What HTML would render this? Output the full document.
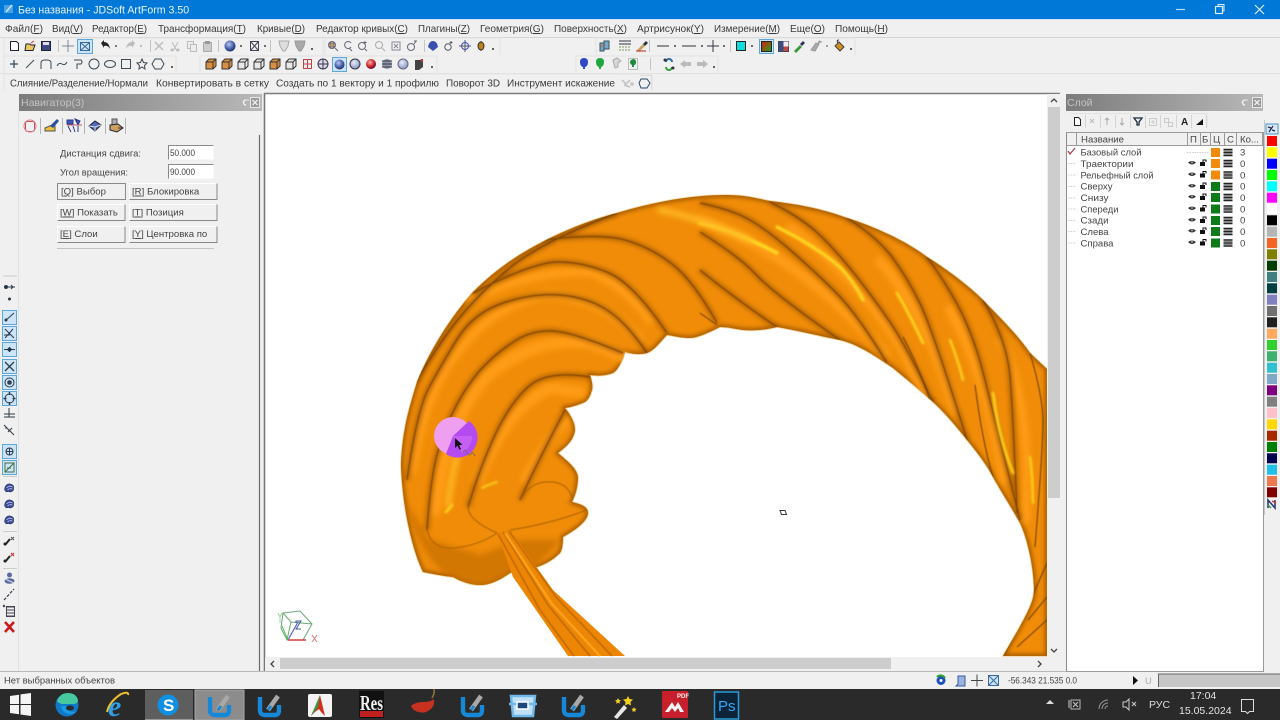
<!DOCTYPE html>
<html lang="ru"><head><meta charset="utf-8"><title>JDSoft ArtForm 3.50</title>
<style>
html,body{margin:0;padding:0;width:1280px;height:720px;overflow:hidden;background:#f0f0f0}
svg{display:block;position:absolute;left:0;top:0}
text{font-family:"Liberation Sans","Noto Sans CJK SC",sans-serif;font-size:10.5px;fill:#333}
.m{font-size:10.2px;fill:#3a3a3a}
.s{font-size:9.4px;fill:#444}
.l{font-size:9.6px;fill:#444}
</style></head><body>
<svg width="1280" height="720" viewBox="0 0 1280 720">
<defs>
<linearGradient id="tg" x1="0" x2="1" y1="0" y2="0"><stop offset="0" stop-color="#7c7c7c"/><stop offset="1" stop-color="#b8b8b8"/></linearGradient>
<radialGradient id="sph" cx=".4" cy=".35" r=".7"><stop offset="0" stop-color="#b8c4f0"/><stop offset=".6" stop-color="#4660a8"/><stop offset="1" stop-color="#1c2a60"/></radialGradient>
<radialGradient id="sph2" cx=".4" cy=".35" r=".7"><stop offset="0" stop-color="#e8ecfa"/><stop offset="1" stop-color="#8090c8"/></radialGradient>
<radialGradient id="sph3" cx=".4" cy=".35" r=".7"><stop offset="0" stop-color="#f4b0b0"/><stop offset=".6" stop-color="#d02020"/><stop offset="1" stop-color="#301040"/></radialGradient>
<linearGradient id="grad" x1="0" y1="0" x2="1" y2="1"><stop offset="0" stop-color="#d02010"/><stop offset=".5" stop-color="#806010"/><stop offset="1" stop-color="#10a030"/></linearGradient>
<filter id="b1" x="-30%" y="-30%" width="160%" height="160%"><feGaussianBlur stdDeviation="1.1"/></filter>
<filter id="b2" x="-30%" y="-30%" width="160%" height="160%"><feGaussianBlur stdDeviation="2"/></filter>
<filter id="b3" x="-30%" y="-30%" width="160%" height="160%"><feGaussianBlur stdDeviation="3"/></filter>
<filter id="b05" x="-10%" y="-10%" width="120%" height="120%"><feGaussianBlur stdDeviation=".5"/></filter>
<clipPath id="ropec"><path id="ro" d="M423 572C410 545 402 500 401 465C402 430 410 405 417 382C430 350 450 318 473 292C495 270 515 257 533 247C560 232 590 220 617 213C650 203 690 195 725 195C745 195 755 198 770 201C795 204 820 208 847 218C870 225 905 240 927 257C945 268 968 285 983 300C1000 318 1018 335 1030 353L1047 369V656H1003L1018 630C1028 612 1034 600 1034 590C1034 570 1028 540 1020 523C1010 505 1000 490 993 477C985 462 975 450 967 440C955 425 945 413 933 402C920 390 905 378 893 368C878 358 860 345 840 340C820 336 795 330 777 327C765 330 755 331 743 330C735 329 728 327 720 327C712 331 698 338 690 338C680 338 675 336 667 335C660 342 655 350 647 353C640 355 632 354 625 352C622 362 618 370 613 373C605 376 597 376 590 375C592 381 593 386 592 390C590 397 588 400 585 402C578 405 572 407 565 408C570 414 575 422 575 430C574 440 566 447 558 453C566 460 577 468 578 477C578 488 575 496 572 502C580 504 588 506 588 513C588 522 572 532 563 537C563 545 562 550 560 553C552 561 542 566 533 568C525 570 517 570 510 573C500 580 490 585 480 585C470 585 460 581 453 577C443 576 433 574 423 572Z"/></clipPath>
<g id="creases">
<path d="M415 383Q443 337 463 313.500Q483 290 511.500 266.500Q540 243 617 213"/>
<path d="M543 240Q600 233 625 240Q650 247 671.500 263.500Q693 280 717 323"/>
<path d="M473 293Q533 262 558 262Q583 262 608 272.500Q633 283 667 333"/>
<path d="M407 480Q417 410 428.500 388.500Q440 367 456.500 340Q473 313 503 303Q533 293 560 295Q587 297 607 310Q627 323 647 353"/>
<path d="M427 530Q430 483 436.500 456.500Q443 430 456.500 405Q470 380 485 365Q500 350 516.500 340Q533 330 553 331Q573 332 623 353"/>
<path d="M468 507Q480 467 495 435Q510 403 528.500 386.500Q547 370 590 377"/>
<path d="M520 500Q540 457 565 410"/>
<path d="M700 203Q733 210 750 220Q767 230 788.500 248.500Q810 267 833.500 290Q857 313 887 363"/>
<path d="M770 202Q800 217 816.500 232Q833 247 853 272Q873 297 890 322Q907 347 933 402"/>
<path d="M847 218Q877 237 892 257Q907 277 920 303.500Q933 330 967 440"/>
<path d="M927 257Q953 293 965 320Q977 347 985 380Q993 413 1020 520"/>
<path d="M983 300Q1007 340 1010 376.500Q1013 413 1017 513"/>
<path d="M700 232Q740 257 756.500 275Q773 293 840 340"/>
<path d="M700 270Q733 297 777 327"/>
</g>
<g id="cube"><path d="M-5 -2L-2 -5H5V2L2 5H-5Z" fill="#d89040" stroke="#333" stroke-width="1"/><path d="M-5 -2H2V5M2 -2L5 -5" fill="none" stroke="#333" stroke-width="1"/></g>
<g id="cube2"><path d="M-5 -2L-2 -5H5V2L2 5H-5Z" fill="#e8e8e8" stroke="#333" stroke-width="1"/><path d="M-5 -2H2V5M2 -2L5 -5" fill="none" stroke="#333" stroke-width="1"/></g>
<g id="eye"><path d="M-4 -1Q0 -4 4 -1Q0 3 -4 -1Z" fill="#333"/><circle cx="0" cy="-1" r="1" fill="#9ab"/></g>
<g id="lock"><rect x="-3" y="-1" width="5" height="4" fill="#111"/><path d="M0 -1V-3H3V-1" fill="none" stroke="#111"/></g>
<g id="pat"><rect x="-4.500" y="-4" width="9" height="8" fill="#888"/><path d="M-4.500 -3H4.500M-4.500 0H4.500M-4.500 3H4.500" stroke="#222" stroke-width="1.100"/></g>
<g id="wing"><path d="M-5 1Q-4 -5 1 -4Q5 -3 4 0Q5 3 1 4Q-2 3 -3 4Q-5 3 -5 1Z" fill="#3d4a9a" stroke="#223" stroke-width=".5"/><path d="M-3 0Q0 -3 3 -1M-2 2Q0 0 3 1" stroke="#b8c0e8" fill="none" stroke-width=".8"/></g>
<g id="af"><path d="M-9 -8V5Q-9 10 -4 10H6Q10 10 10 5V0" fill="none" stroke="#1688d8" stroke-width="4.400"/><path d="M-1 5L9 -9" stroke="#a8a8a8" stroke-width="4.600"/><path d="M-1 5L2 1" stroke="#1688d8" stroke-width="3"/></g>
</defs>

<!-- title bar -->
<rect width="1280" height="19" fill="#0078d7"/>
<rect x="0" y="19" width="1280" height="1" fill="#cfe3f4"/>
<path d="M4 5h9v8H4z" fill="#4aa2e6"/><path d="M6 12L12 5" stroke="#c8e4f8" stroke-width="1.500"/>
<text x="18" y="13.500" style="fill:#e8f2fb;font-size:10.600px">Без названия - JDSoft ArtForm 3.50</text>
<path d="M1176 9.500h9" stroke="#b8d8f2" stroke-width="1.200"/>
<rect x="1215.500" y="6.500" width="7" height="7" fill="none" stroke="#dcecf9" stroke-width="1.200"/><path d="M1218 6V4.500H1224V11H1223" fill="none" stroke="#dcecf9"/>
<path d="M1255 5l9 9M1264 5l-9 9" stroke="#e4f0fa" stroke-width="1.200"/>

<!-- menu -->
<text class="m" x="5" y="32" textLength="38" lengthAdjust="spacingAndGlyphs">Файл(<tspan text-decoration="underline">F</tspan>)</text>
<text class="m" x="52" y="32" textLength="31" lengthAdjust="spacingAndGlyphs">Вид(<tspan text-decoration="underline">V</tspan>)</text>
<text class="m" x="92" y="32" textLength="55" lengthAdjust="spacingAndGlyphs">Редактор(<tspan text-decoration="underline">E</tspan>)</text>
<text class="m" x="158" y="32" textLength="88" lengthAdjust="spacingAndGlyphs">Трансформация(<tspan text-decoration="underline">T</tspan>)</text>
<text class="m" x="257" y="32" textLength="48" lengthAdjust="spacingAndGlyphs">Кривые(<tspan text-decoration="underline">D</tspan>)</text>
<text class="m" x="316" y="32" textLength="92" lengthAdjust="spacingAndGlyphs">Редактор кривых(<tspan text-decoration="underline">C</tspan>)</text>
<text class="m" x="418" y="32" textLength="52" lengthAdjust="spacingAndGlyphs">Плагины(<tspan text-decoration="underline">Z</tspan>)</text>
<text class="m" x="480" y="32" textLength="64" lengthAdjust="spacingAndGlyphs">Геометрия(<tspan text-decoration="underline">G</tspan>)</text>
<text class="m" x="554" y="32" textLength="73" lengthAdjust="spacingAndGlyphs">Поверхность(<tspan text-decoration="underline">X</tspan>)</text>
<text class="m" x="637" y="32" textLength="67" lengthAdjust="spacingAndGlyphs">Артрисунок(<tspan text-decoration="underline">Y</tspan>)</text>
<text class="m" x="714" y="32" textLength="66" lengthAdjust="spacingAndGlyphs">Измерение(<tspan text-decoration="underline">M</tspan>)</text>
<text class="m" x="790" y="32" textLength="35" lengthAdjust="spacingAndGlyphs">Еще(<tspan text-decoration="underline">O</tspan>)</text>
<text class="m" x="835" y="32" textLength="53" lengthAdjust="spacingAndGlyphs">Помощь(<tspan text-decoration="underline">H</tspan>)</text>
<path d="M0 37.500H1280" stroke="#d4d4d4"/>

<!-- toolbar frames -->
<g fill="none" stroke="#e2e2e2">
<path d="M4 55V38H323V55"/><path d="M325 55V38H500V55"/><path d="M596 55V38H855V55"/>
<path d="M4 73V56H176V73"/><path d="M200 73V56H437V73"/><path d="M576 73V56H718V73"/>
<path d="M0 73.500H1280"/>
<path d="M4 91V74H652V91"/>
</g>

<!-- toolbar 1 -->
<g stroke-width="1">
<path d="M10.500 41.500h6l2 2v7h-8z" fill="#fff" stroke="#223"/>
<path d="M26 44h4l1 1h4l-2 5.500h-8z" fill="#e8c860" stroke="#223"/><path d="M31 43l3-2" stroke="#c33"/>
<rect x="41.500" y="41.500" width="9" height="9" fill="#3a4a80" stroke="#223"/><rect x="43" y="42" width="6" height="3" fill="#dde"/>
<path d="M58.500 40v12M150.500 40v12M218.500 40v12M270.500 40v12M424.500 40v12M649.500 40v12M730.500 40v12" stroke="#c4c4c4"/>
<path d="M62 46h12M68 40v12" stroke="#7a8a96"/>
<rect x="77.500" y="39.500" width="15" height="14" fill="#cce4f7" stroke="#5ea6d8"/>
<rect x="80.500" y="42.500" width="9" height="8" fill="none" stroke="#3a6a96"/><path d="M80.500 42.500l9 8M89.500 42.500l-9 8" stroke="#3a6a96"/>
<path d="M101 43l3-3v2q5 0 6 7q-2-4-6-3v2z" fill="#222"/><circle cx="116" cy="46" r="1" fill="#555"/>
<path d="M135 43l-3-3v2q-5 0-6 7q2-4 6-3v2z" fill="#bbb"/><circle cx="141" cy="46" r="1" fill="#aaa"/>
<path d="M155 42l8 8M163 42l-8 8" stroke="#bdbdbd" stroke-width="1.500"/>
<path d="M172 42l5 9M178 42l-5 9" stroke="#bdbdbd"/><circle cx="172" cy="50" r="1.500" fill="#bbb"/><circle cx="178" cy="50" r="1.500" fill="#bbb"/>
<rect x="187.500" y="41.500" width="6" height="7" fill="#eee" stroke="#bbb"/><rect x="190.500" y="44.500" width="6" height="7" fill="#eee" stroke="#bbb"/>
<rect x="203.500" y="42.500" width="8" height="9" fill="#ccc" stroke="#aaa"/><rect x="205" y="41" width="5" height="3" fill="#999"/>
<circle cx="230" cy="46" r="5.500" fill="url(#sph)"/><circle cx="241" cy="46" r="1" fill="#444"/>
<rect x="250.500" y="41.500" width="8" height="9" fill="none" stroke="#445"/><path d="M250.500 41.500l8 9M258.500 41.500l-8 9" stroke="#445"/><circle cx="265" cy="46" r="1" fill="#444"/>
<path d="M279 41h10l-1 5-3 5h-2l-3-5z" fill="#ddd" stroke="#aaa"/>
<path d="M295 41h10l-1 5-3 5h-2l-3-5z" fill="#aaa" stroke="#999"/><circle cx="312" cy="49" r="1" fill="#333"/>
<g fill="none" stroke="#667">
<circle cx="332" cy="45" r="3.500"/><path d="M335 48l3 3"/><rect x="330" y="43" width="4" height="4" fill="#d8a050"/>
<path d="M351 43a3.500 3.500 0 1 0 0 4M349 48l3 3"/>
<circle cx="362" cy="46" r="3.500"/><path d="M365 49l2 2M365 41v3M363.500 42.500h3"/>
<circle cx="379" cy="45" r="3.500" stroke="#aaa"/><path d="M382 48l3 3" stroke="#aaa"/>
<rect x="392" y="42" width="8" height="8" stroke="#889"/><path d="M394 44l4 4M398 44l-4 4" stroke="#889"/>
<circle cx="411" cy="47" r="3.500"/><path d="M414 44l2-3M414 41h3"/>
</g>
<path d="M428 47q1-6 5-6t5 6l-5 4z" fill="#3a50b0"/>
<circle cx="448" cy="47" r="3.200" fill="none" stroke="#556"/><path d="M451 41v3M449.500 42.500h3" stroke="#556"/>
<path d="M465 40v12M459 46h12" stroke="#556"/><circle cx="465" cy="46" r="3.500" fill="none" stroke="#3a50b0"/>
<path d="M481 41v10" stroke="#333"/><path d="M478 46a3 4 0 0 0 6 0a3 4 0 0 0-6 0" fill="#c08020" stroke="#333"/>
<circle cx="493" cy="49" r="1" fill="#333"/>
<path d="M600 43h4v8h-4zM604 41h5v8h-5z" fill="#7aa8cc" stroke="#355"/><path d="M604 44l-3 3" stroke="#c63"/>
<path d="M619 41h12M619 44h12" stroke="#334"/><path d="M619 47h12M619 50h12" stroke="#7a9a5a" stroke-dasharray="2 1"/>
<path d="M637 50l6-6 2 2-6 6z" fill="#caa060"/><path d="M643 44l3-3 2 2-3 3z" fill="#333"/><path d="M636 51h10" stroke="#b22"/>
<path d="M657 46h12" stroke="#333"/><circle cx="675" cy="46" r="1" fill="#444"/>
<path d="M682 46h14" stroke="#333"/><circle cx="702" cy="46" r="1" fill="#444"/>
<path d="M707 46h12M713 40v12" stroke="#334"/><circle cx="724" cy="46" r="1" fill="#444"/>
<rect x="736.500" y="41.500" width="9" height="9" fill="#10dcdc" stroke="#222"/><circle cx="752" cy="46" r="1" fill="#444"/>
<rect x="759.500" y="39.500" width="14" height="14" fill="#cce4f7" stroke="#5ea6d8"/><rect x="761.500" y="41.500" width="10" height="10" fill="url(#grad)" stroke="#222"/>
<rect x="778.500" y="41.500" width="10" height="10" fill="#c04848" stroke="#444"/><rect x="778.500" y="41.500" width="5" height="10" fill="#3a5080"/><rect x="783.500" y="41.500" width="5" height="5" fill="#eee"/>
<path d="M794 51l6-6 2 2-6 6z" fill="#3a9a3a"/><path d="M800 44l3-3 2 2-3 3z" fill="#335"/>
<path d="M811 50l5-7 3 1-4 7zM818 44l1-3 3 1" fill="#aaa" stroke="#999"/><circle cx="827" cy="46" r="1" fill="#888"/>
<path d="M835 46l4-4 5 5-4 4z" fill="#d09020" stroke="#444"/><path d="M838 43q-2-3 1-3" fill="none" stroke="#333"/><circle cx="851" cy="49" r="1" fill="#333"/>
</g>

<!-- toolbar 2 -->
<g fill="none" stroke="#3a4a56">
<path d="M10 64h8M14 60v8" stroke-width="1.300"/>
<path d="M26 68l8-8"/>
<path d="M41 69v-6q0-3 4-3h2q4 0 4 3v6"/>
<path d="M57 66q2-4 5-2t5-2"/>
<path d="M74 60h7q2 2 0 4h-4v5"/>
<circle cx="94" cy="64" r="5"/>
<ellipse cx="110" cy="64" rx="5.500" ry="3.500"/>
<rect x="121.500" y="59.500" width="9" height="9"/>
<path d="M142 59l1.500 3.500 3.500.5-2.500 2.500.5 3.500-3-2-3 2 .5-3.500-2.500-2.500 3.500-.5z"/>
<path d="M155 59h6l3 5-3 5h-6l-3-5z"/>
</g>
<circle cx="172" cy="67" r="1" fill="#333"/>
<use href="#cube" x="211" y="64"/><use href="#cube" x="227" y="64"/><use href="#cube2" x="243" y="64"/><use href="#cube2" x="259" y="64"/><use href="#cube" x="275" y="64"/><use href="#cube2" x="291" y="64"/>
<rect x="303.500" y="59.500" width="8" height="9" fill="#eee" stroke="#b44"/><path d="M307.500 59.500v9M303.500 64h8" stroke="#b44"/>
<circle cx="323" cy="64" r="5" fill="#dde" stroke="#334"/><path d="M318 64h10M323 59v10" stroke="#334"/>
<rect x="332.500" y="57.500" width="14" height="14" fill="#cce4f7" stroke="#5ea6d8"/><circle cx="339.500" cy="64.500" r="5" fill="url(#sph)"/>
<circle cx="355" cy="64" r="5" fill="url(#sph2)" stroke="#334"/>
<circle cx="371" cy="64" r="5" fill="url(#sph3)"/>
<ellipse cx="387" cy="64" rx="5" ry="5" fill="#9098a8"/><path d="M382 61h10M382 64h10M382 67h10" stroke="#334"/>
<circle cx="403" cy="64" r="5" fill="url(#sph2)" stroke="#667"/>
<path d="M415 60h5l3-1v8l-4 3h-4z" fill="#444"/><rect x="421" y="59" width="2" height="3" fill="#c33"/>
<circle cx="432" cy="67" r="1" fill="#333"/>
<path d="M584 58q4 0 4 4t-3 5v2h-2v-2q-3-1-3-5t4-4z" fill="#3048c8"/>
<path d="M600 58q4 0 4 4t-3 5v2h-2v-2q-3-1-3-5t4-4z" fill="#20a840"/>
<path d="M613 60l4-2 4 3-3 2v4l-3 1z" fill="#d8d8d8" stroke="#aaa"/>
<rect x="628.500" y="58.500" width="9" height="11" fill="none" stroke="#888" stroke-dasharray="1 1"/><path d="M633 59q3 0 3 3t-2 3v2h-2v-2q-2-1-2-3t3-3z" fill="#208a40"/>
<path d="M650.500 58v12" stroke="#c4c4c4"/>
<path d="M666 62a3 3 0 0 1 6 0" fill="none" stroke="#2a6aa8" stroke-width="2"/><path d="M666 67a3 3 0 0 0 6 0" fill="none" stroke="#30a040" stroke-width="2"/><circle cx="665" cy="60" r="1.500" fill="#333"/><circle cx="673" cy="68" r="1.500" fill="#333"/>
<path d="M680 64l5-4v2h6v4h-6v2z" fill="#bbb"/>
<path d="M708 64l-5-4v2h-6v4h6v2z" fill="#bbb"/>
<circle cx="714" cy="67" r="1" fill="#333"/>

<!-- toolbar 3 -->
<text class="m" x="10" y="86.500" textLength="138" lengthAdjust="spacingAndGlyphs">Слияние/Разделение/Нормали</text>
<text class="m" x="156" y="86.500" textLength="113" lengthAdjust="spacingAndGlyphs">Конвертировать в сетку</text>
<text class="m" x="276" y="86.500" textLength="163" lengthAdjust="spacingAndGlyphs">Создать по 1 вектору и 1 профилю</text>
<text class="m" x="446" y="86.500" textLength="54" lengthAdjust="spacingAndGlyphs">Поворот 3D</text>
<text class="m" x="507" y="86.500" textLength="108" lengthAdjust="spacingAndGlyphs">Инструмент искажение</text>
<path d="M622 80l4 4 4-4M624 85l6 2" fill="none" stroke="#c0c0c0" stroke-width="1.500"/><circle cx="632" cy="84" r="2" fill="#ccc"/>
<path d="M640.500 75.500h11v15" fill="none" stroke="#ddd"/>
<path d="M641 79h6l3 4-3 5h-6l-2-5z" fill="none" stroke="#2a4a6a"/>

<!-- viewport -->
<rect x="265" y="94" width="782" height="563" fill="#fff"/>
<path d="M264.500 93v578" stroke="#777" stroke-width="1.600"/>
<path d="M264 93.500H1060" stroke="#7c7c7c" stroke-width="1.400"/>

<!-- rope -->
<use href="#ro" fill="none" stroke="#f4d6ac" stroke-width="1.800"/>
<use href="#ro" fill="#f08c08"/>
<g clip-path="url(#ropec)">
<use href="#ro" fill="none" stroke="#8f5000" stroke-width="4" filter="url(#b2)" opacity=".9"/>
<!-- bottom head darker -->
<path d="M405 500Q425 580 480 590Q530 580 560 540L520 540L480 555L430 540Z" fill="#c87004" filter="url(#b3)" opacity=".75"/>
<!-- broad light strands -->
<g fill="none" stroke="#ff9c14" filter="url(#b3)" stroke-linecap="round" stroke-linejoin="round">
<path stroke-width="9" d="M412 470Q425 395 452 360Q490 305 545 295Q600 295 640 340"/>
<path stroke-width="12" d="M435 510Q445 425 485 378Q535 335 590 343Q610 350 625 358"/>
<path stroke-width="11" d="M478 480Q505 410 550 388L580 392"/>
<path stroke-width="9" d="M525 480Q545 440 565 422"/>
<path stroke-width="9" d="M470 300Q530 270 590 272Q625 285 650 320"/>
<path stroke-width="10" d="M700 220Q770 245 830 298Q865 330 885 355"/>
<path stroke-width="9" d="M790 228Q850 270 900 345Q915 375 925 395"/>
<path stroke-width="10" d="M880 262Q925 310 955 410"/>
<path stroke-width="10" d="M950 310Q985 370 1005 480"/>
<path stroke-width="8" d="M1000 340Q1032 400 1026 520"/>
</g>
<!-- soft shadow at creases -->
<use href="#creases" fill="none" stroke="#9a5400" stroke-width="5" filter="url(#b2)" opacity=".7"/>
<!-- crease lines -->
<use href="#creases" fill="none" stroke="#6e3c00" stroke-width="1" filter="url(#b05)" opacity=".9"/>
<g fill="none" stroke="#6e3c00" stroke-width="1" filter="url(#b05)">
<path d="M1030 353Q1043 397 1043 422Q1043 447 1035 547"/>
<path d="M975 385Q982 440 993 477"/>
<path d="M903 337Q918 365 930 400"/>
<path d="M700 313L717 325"/>
<path d="M1047 563L1035 590Q1020 625 1003 656"/>
<path d="M1047 597L1028 620"/>
<path d="M1047 620L1017 647"/>
</g>
<g fill="none" stroke="#a86000" stroke-width="1" filter="url(#b05)">
<path d="M520 500Q530 483 545 482Q568 480 573 500"/>
<path d="M468 507Q468 520 497 533"/>
<path d="M510 530Q550 524 587 510"/>
<path d="M427 530Q432 550 455 548Q480 545 497 533"/>
</g>
<!-- highlights -->
<g fill="none" stroke="#ffdc20" stroke-linecap="round" filter="url(#b1)">
<path stroke-width="3.500" d="M700 223Q733 230 777 253"/>
<path stroke-width="3" d="M777 227Q817 247 840 267Q855 283 863 300"/>
<path stroke-width="2.600" d="M897 293Q910 315 923 343"/>
<path stroke-width="2.200" d="M950 340Q958 360 963 380"/>
<path stroke-width="2.600" d="M993 393Q998 435 1013 473"/>
<path stroke-width="2" d="M1030 457Q1033 480 1033 503"/>
<path stroke-width="2.500" d="M446 512L452 505"/>
<path stroke-width="1.800" d="M482 488Q490 484 497 482"/>
</g>
<g fill="none" stroke="#ffb820" stroke-linecap="round" filter="url(#b3)">
<path stroke-width="6" d="M448 505Q452 470 462 440"/>
<path stroke-width="6" d="M660 210Q700 218 750 240"/>
</g>
</g>

<!-- tail over the head -->
<path d="M497 533L510 530L553 590L625 656H568L513 577Z" fill="#ec8604"/>
<path d="M503 532L548 605L590 656M498 534L540 610L574 656M509 531L556 597L612 656" stroke="#a85a00" stroke-width="1" fill="none" filter="url(#b05)"/>
<path d="M505 533L552 604L600 656" stroke="#ffa820" stroke-width="2" fill="none" filter="url(#b05)"/>

<!-- cursor glow -->
<circle cx="453" cy="436" r="19" fill="#ee9ff0"/>
<path d="M453 436L469 421A19 19 0 0 1 446 454Z" fill="#b44af0"/>
<path d="M453 436L472 436A19 19 0 0 1 462 453L457 444Z" fill="#c660f2"/>
<path d="M455 438v10l2.500-2.200 2 4 1.500-.8-2-3.800 3.400-.4z" fill="#111"/>
<path d="M463 452q2-3 3-1t2 3q2 2 3 0t2-1 2 3" fill="none" stroke="#666" stroke-width=".7"/>
<path d="M780 510.500h5l1.500 4h-5z" fill="#fff" stroke="#334" stroke-width="1"/>

<!-- axes -->
<g fill="none" stroke-width="1">
<path d="M283 613l17-2 12 13-9 16h-16l-6-12zM283 613l8 9 21 2M291 622l-4 18" stroke="#6aa878"/>
<path d="M288 640l10-18" stroke="#6060c8" stroke-width="1.200"/>
<path d="M288 640h18" stroke="#d04040" stroke-width="1.500"/>
<path d="M288 640l-6-14" stroke="#50c050"/>
<path d="M296 623v-2h5l-5 8h5" stroke="#3a5a90"/>
<path d="M312 635l5 7M317 635l-5 7" stroke="#d08080"/>
<path d="M278 613l2 4 2-4M280 617v6" stroke="#a0d0a0"/>
</g>

<!-- scrollbars -->
<rect x="1047" y="94" width="13" height="563" fill="#f0f0f0"/>
<rect x="1048" y="107" width="12" height="391" fill="#cdcdcd"/>
<path d="M1051 102l3-3 3 3M1051 649l3 3 3-3" fill="none" stroke="#444" stroke-width="1.300"/>
<rect x="265" y="657" width="795" height="14" fill="#f0f0f0"/>
<rect x="280" y="658" width="611" height="11" fill="#cdcdcd"/>
<path d="M274 661l-3 3 3 3M1038 661l3 3-3 3" fill="none" stroke="#444" stroke-width="1.300"/>

<!-- navigator panel -->
<rect x="19" y="94" width="243" height="17" fill="url(#tg)"/>
<text x="21" y="106" style="fill:#c4c4c4;font-size:10.500px">Навигатор(3)</text>
<path d="M246 100a2.500 2.500 0 1 0 0 5" fill="none" stroke="#f0f0f0" stroke-width="1.500"/><path d="M245 100h3v-1" stroke="#f0f0f0"/>
<rect x="250.500" y="97.500" width="9" height="10" fill="#9a9a9a" stroke="#e8e8e8"/><path d="M252.500 100l5 5M257.500 100l-5 5" stroke="#f0f0f0" stroke-width="1.300"/>
<path d="M18.500 111v560" stroke="#e0e0e0"/>
<path d="M259.500 135V672" stroke="#6c6c6c" stroke-width="1.200"/>
<path d="M40.500 118v16M62.500 118v16M84.500 118v16M105.500 118v16M125.500 118v16" stroke="#b4b4b4"/>
<rect x="25.500" y="121.500" width="9" height="10" rx="2" fill="none" stroke="#c04a5a"/><circle cx="30" cy="126" r="6" fill="none" stroke="#d8808a"/>
<path d="M45 128l7-3 3 1v5H45z" fill="#e8c040" stroke="#554"/><path d="M50 126l7-7 2 2-6 7z" fill="#2a50a0"/>
<path d="M67 120h6v4h-6zM75 119l5 2-2 4zM68 126l3 6M73 126l2 6M78 126v6" fill="#405ac0" stroke="#2a3a80"/><path d="M67 125h15" stroke="#c06060"/>
<path d="M89 126l6-5 6 4-6 6z" fill="#5068b8" stroke="#223"/><path d="M89 126l6 1 6-2M95 127v4" stroke="#dde" fill="none"/>
<rect x="112" y="119" width="5" height="6" fill="#aaa" stroke="#555"/><path d="M110 125l8-1 5 4-6 4-7-2z" fill="#d0a060" stroke="#223"/><path d="M118 128l5 0" stroke="#334"/>

<text class="l" x="60" y="156.300" textLength="81" lengthAdjust="spacingAndGlyphs">Дистанция сдвига:</text>
<text class="l" x="60" y="175.300" textLength="68" lengthAdjust="spacingAndGlyphs">Угол вращения:</text>
<rect x="168.500" y="145.500" width="45" height="14" fill="#fff"/><path d="M168.500 159.500v-14h45" fill="none" stroke="#8a8a8a"/>
<rect x="168.500" y="164.500" width="45" height="14" fill="#fff"/><path d="M168.500 178.500v-14h45" fill="none" stroke="#8a8a8a"/>
<text class="l" x="170" y="156" textLength="25" lengthAdjust="spacingAndGlyphs">50.000</text>
<text class="l" x="170" y="175" textLength="25" lengthAdjust="spacingAndGlyphs">90.000</text>

<g fill="none">
<path d="M57.500 199.500v-16h67" stroke="#fff"/><path d="M57.500 199.500h68v-16" stroke="#777"/>
<rect x="57.500" y="183.500" width="68" height="16" stroke="#8a8a8a"/>
<path d="M129.500 199v-15.500h87" stroke="#fff"/><path d="M129.500 199.500h87.500v-16" stroke="#888"/>
<path d="M57.500 220v-15.500h67" stroke="#fff"/><path d="M57.500 220.500h67.500v-16" stroke="#888"/>
<path d="M129.500 220v-15.500h87" stroke="#fff"/><path d="M129.500 220.500h87.500v-16" stroke="#888"/>
<path d="M57.500 242v-15.500h67" stroke="#fff"/><path d="M57.500 242.500h67.500v-16" stroke="#888"/>
<path d="M129.500 242v-15.500h87" stroke="#fff"/><path d="M129.500 242.500h87.500v-16" stroke="#888"/>
<path d="M57 248.500h157" stroke="#c4c4c4"/>
</g>
<text class="l" x="61" y="194.500">[<tspan text-decoration="underline">Q</tspan>] Выбор</text>
<text class="l" x="132" y="194.500">[<tspan text-decoration="underline">R</tspan>] Блокировка</text>
<text class="l" x="60" y="215.500">[<tspan text-decoration="underline">W</tspan>] Показать</text>
<text class="l" x="132" y="215.500">[<tspan text-decoration="underline">T</tspan>] Позиция</text>
<text class="l" x="60" y="237">[<tspan text-decoration="underline">E</tspan>] Слои</text>
<text class="l" x="132" y="237">[<tspan text-decoration="underline">Y</tspan>] Центровка по</text>

<!-- left toolbar -->
<g fill="#cce4f7" stroke="#5ea6d8">
<rect x="2.500" y="310.500" width="14" height="14"/><rect x="2.500" y="326.500" width="14" height="14"/><rect x="2.500" y="342.500" width="14" height="14"/><rect x="2.500" y="359.500" width="14" height="14"/><rect x="2.500" y="375.500" width="14" height="14"/><rect x="2.500" y="391.500" width="14" height="14"/>
<rect x="2.500" y="444.500" width="14" height="14"/><rect x="2.500" y="460.500" width="14" height="14"/>
</g>
<path d="M3 276h14M3 476.500h14M3 531.500h14M3 568.500h14" stroke="#ccc"/>
<g fill="none" stroke="#2a3a4a">
<path d="M4 287h11"/><circle cx="6" cy="287" r="1.500" fill="#234"/><path d="M11 285l2 2-2 2"/>
<circle cx="9.500" cy="299" r="1" fill="#234"/>
<path d="M5 321l9-8"/><circle cx="6" cy="320" r="1" fill="#234"/>
<path d="M5 329l9 9M13 329l-8 9M4 335h6"/>
<path d="M4 349.500h11M9.500 347v5"/><circle cx="9.500" cy="349.500" r="1.500" fill="#234"/>
<path d="M5 362l9 9M14 362l-9 9" stroke-width="1.300"/>
<circle cx="9.500" cy="382.500" r="4.500"/><circle cx="9.500" cy="382.500" r="1.800" fill="#345"/>
<circle cx="9.500" cy="398.500" r="4.500"/><path d="M9.500 392v3M9.500 402v3M3.500 398.500h3M12.500 398.500h3" stroke-width="1.500"/>
<path d="M9 408v9M4 414h11M4 417h11"/>
<path d="M4 425l10 10M8 432l4-4"/><path d="M5 428q3 0 4 3" stroke="#555"/>
<circle cx="9.500" cy="451.500" r="3.500"/><path d="M6 451.500h7M9.500 448v7"/>
<rect x="5" y="463" width="9" height="9" stroke="#4a6a4a"/><path d="M5 472l9-9M7 468h4" stroke="#307a30"/>
</g>
<use href="#wing" x="9.500" y="488"/><use href="#wing" x="9.500" y="504"/><use href="#wing" x="9.500" y="520"/>
<path d="M5 545l5-6" stroke="#222" stroke-width="2"/><path d="M11 537l3 3M14 537l-3 3" stroke="#555"/><circle cx="5" cy="544" r="1.500" fill="#222"/>
<path d="M5 562l5-6" stroke="#222" stroke-width="2"/><path d="M11 553l3 3M14 553l-3 3" stroke="#d03030" stroke-width="1.200"/><circle cx="5" cy="561" r="1.500" fill="#222"/>
<circle cx="9.500" cy="575" r="2.500" fill="#5a6aa0"/><ellipse cx="9.500" cy="581" rx="5" ry="2.800" fill="#5a6aa0"/><path d="M5 579l9 4" stroke="#ddd"/>
<path d="M4 600l10-11" stroke="#445" stroke-dasharray="3 1.500" stroke-width="1.300"/>
<path d="M7 607h8M7 610h8M7 613h8M7 616h8" stroke="#445"/><rect x="6.500" y="606.500" width="8" height="10" fill="none" stroke="#445"/><path d="M3 605l2 2M5 605l-2 2" stroke="#445"/>
<path d="M5 622l9 10M14 622l-9 10" stroke="#d01818" stroke-width="2.500"/>

<!-- layer panel -->
<rect x="1066" y="94" width="197" height="17" fill="url(#tg)"/>
<text x="1067" y="106" style="fill:#c4c4c4;font-size:10.500px">Слой</text>
<path d="M1245 100a2.500 2.500 0 1 0 0 5" fill="none" stroke="#f0f0f0" stroke-width="1.500"/><path d="M1244 100h3v-1" stroke="#f0f0f0"/>
<rect x="1252.500" y="97.500" width="9" height="10" fill="#9a9a9a" stroke="#e8e8e8"/><path d="M1254.500 100l5 5M1259.500 100l-5 5" stroke="#f0f0f0" stroke-width="1.300"/>
<path d="M1070 113.500h137v15" fill="none" stroke="#e2e2e2"/>
<path d="M1085.500 115v13M1100.500 115v13M1115.500 115v13M1130.500 115v13M1145.500 115v13M1160.500 115v13M1176.500 115v13M1191.500 115v13M1206.500 115v13" stroke="#d4d4d4"/>
<path d="M1074.500 117.500h4l2 2v6h-6z" fill="#fff" stroke="#222"/>
<path d="M1090 119l4 4M1094 119l-4 4" stroke="#bbb"/>
<path d="M1107 118v7M1105 120l2-2 2 2" fill="none" stroke="#aaa"/>
<path d="M1122 118v7M1120 123l2 2 2-2" fill="none" stroke="#aaa"/>
<path d="M1134 118h8l-3 4v3h-2v-3z" fill="none" stroke="#1a2a3a" stroke-width="1.300"/>
<rect x="1149.500" y="118.500" width="7" height="7" fill="none" stroke="#ccc"/><path d="M1151 122h4M1153 120v4" stroke="#ccc"/>
<path d="M1164.500 118.500h4v4h-4zM1168.500 122.500h4v4h-4z" fill="none" stroke="#ccc"/>
<text x="1181" y="125" style="font-size:10px;font-weight:bold;fill:#222">A</text>
<path d="M1196 125l7-6v6z" fill="#111"/>

<rect x="1066" y="132" width="197" height="539" fill="#fff"/>
<path d="M1066.500 132v539" stroke="#8c8c8c"/><path d="M1263.500 132v539" stroke="#9a9a9a"/>
<path d="M1066 671.500h198" stroke="#9a9a9a"/>
<rect x="1067" y="132" width="196" height="14" fill="#f0f0f0"/>
<path d="M1066 132.500h197M1066 145.500h197" stroke="#9a9a9a"/>
<path d="M1076.500 132v14M1187.500 132v14M1200.500 132v14M1210.500 132v14M1224.500 132v14M1236.500 132v14M1262.500 132v14" stroke="#9a9a9a"/>
<text class="l" x="1081" y="142.500" textLength="43" lengthAdjust="spacingAndGlyphs">Название</text>
<text class="l" x="1190" y="142.500">П</text>
<text class="l" x="1202" y="142.500">Б</text>
<text class="l" x="1213" y="142.500">Ц</text>
<text class="l" x="1227" y="142.500">С</text>
<text class="l" x="1240" y="142.500">Ко...</text>
<path d="M1068 151l2 3 5-6" fill="none" stroke="#a83a4a" stroke-width="1.200"/>
<text class="l" x="1080.500" y="155.500" textLength="61" lengthAdjust="spacingAndGlyphs">Базовый слой</text>
<text class="l" x="1080.500" y="167" textLength="53" lengthAdjust="spacingAndGlyphs">Траектории</text>
<text class="l" x="1080.500" y="178.300" textLength="73" lengthAdjust="spacingAndGlyphs">Рельефный слой</text>
<text class="l" x="1080.500" y="189.600" textLength="32" lengthAdjust="spacingAndGlyphs">Сверху</text>
<text class="l" x="1080.500" y="201" textLength="28" lengthAdjust="spacingAndGlyphs">Снизу</text>
<text class="l" x="1080.500" y="212.300" textLength="38" lengthAdjust="spacingAndGlyphs">Спереди</text>
<text class="l" x="1080.500" y="223.600" textLength="28" lengthAdjust="spacingAndGlyphs">Сзади</text>
<text class="l" x="1080.500" y="235" textLength="28" lengthAdjust="spacingAndGlyphs">Слева</text>
<text class="l" x="1080.500" y="246.300" textLength="33" lengthAdjust="spacingAndGlyphs">Справа</text>
<path d="M1068 163.500h8M1068 175h8M1068 186.500h8M1068 198h8M1068 209h8M1068 220.500h8M1068 231.500h8M1068 243h8M1187 152.500h22" stroke="#d0d0d0" stroke-dasharray="1.500 1"/>
<use href="#eye" x="1192" y="163.500"/><use href="#eye" x="1192" y="175"/><use href="#eye" x="1192" y="186.500"/><use href="#eye" x="1192" y="197.500"/><use href="#eye" x="1192" y="209"/><use href="#eye" x="1192" y="220.500"/><use href="#eye" x="1192" y="231.500"/><use href="#eye" x="1192" y="243"/>
<use href="#lock" x="1203" y="163"/><use href="#lock" x="1203" y="174.500"/><use href="#lock" x="1203" y="186"/><use href="#lock" x="1203" y="197"/><use href="#lock" x="1203" y="208.500"/><use href="#lock" x="1203" y="220"/><use href="#lock" x="1203" y="231"/><use href="#lock" x="1203" y="242.500"/>
<g fill="#f28a0c"><rect x="1211" y="148" width="9" height="9"/><rect x="1211" y="159" width="9" height="9"/><rect x="1211" y="170.500" width="9" height="9"/></g>
<g fill="#0f7a18"><rect x="1211" y="182" width="9" height="9"/><rect x="1211" y="193" width="9" height="9"/><rect x="1211" y="204.500" width="9" height="9"/><rect x="1211" y="216" width="9" height="9"/><rect x="1211" y="227" width="9" height="9"/><rect x="1211" y="238.500" width="9" height="9"/></g>
<use href="#pat" x="1228" y="152.500"/><use href="#pat" x="1228" y="163.500"/><use href="#pat" x="1228" y="175"/><use href="#pat" x="1228" y="186.500"/><use href="#pat" x="1228" y="197.500"/><use href="#pat" x="1228" y="209"/><use href="#pat" x="1228" y="220.500"/><use href="#pat" x="1228" y="231.500"/><use href="#pat" x="1228" y="243"/>
<text class="l" x="1240" y="155.500">3</text><text class="l" x="1240" y="167">0</text><text class="l" x="1240" y="178.300">0</text><text class="l" x="1240" y="189.600">0</text><text class="l" x="1240" y="201">0</text><text class="l" x="1240" y="212.300">0</text><text class="l" x="1240" y="223.600">0</text><text class="l" x="1240" y="235">0</text><text class="l" x="1240" y="246.300">0</text>

<!-- palette -->
<path d="M1264.500 120v395" stroke="#c8c8c8"/>
<rect x="1266" y="124" width="12" height="10" fill="#d8e8f4" stroke="#4a90c8"/><path d="M1269 132l4-6M1268 127l3 1M1272 130l3 1" stroke="#224" stroke-width="1.200"/>
<rect x="1267" y="136" width="10" height="10" fill="#f00"/><rect x="1267" y="147.300" width="10" height="10" fill="#ff0"/><rect x="1267" y="158.700" width="10" height="10" fill="#00f"/><rect x="1267" y="170" width="10" height="10" fill="#0f0"/><rect x="1267" y="181.300" width="10" height="10" fill="#0ff"/><rect x="1267" y="192.700" width="10" height="10" fill="#f0f"/><rect x="1267" y="204" width="10" height="10" fill="#fff"/><rect x="1267" y="215.300" width="10" height="10" fill="#000"/><rect x="1267" y="226.700" width="10" height="10" fill="#b5b5b5"/><rect x="1267" y="238" width="10" height="10" fill="#f26522"/><rect x="1267" y="249.300" width="10" height="10" fill="#808000"/><rect x="1267" y="260.700" width="10" height="10" fill="#004000"/><rect x="1267" y="272" width="10" height="10" fill="#408080"/><rect x="1267" y="283.300" width="10" height="10" fill="#004040"/><rect x="1267" y="294.700" width="10" height="10" fill="#8080c0"/><rect x="1267" y="306" width="10" height="10" fill="#707070"/><rect x="1267" y="317.300" width="10" height="10" fill="#202020"/><rect x="1267" y="328.700" width="10" height="10" fill="#ffa860"/><rect x="1267" y="340" width="10" height="10" fill="#30d030"/><rect x="1267" y="351.300" width="10" height="10" fill="#40b070"/><rect x="1267" y="362.700" width="10" height="10" fill="#30c0d0"/><rect x="1267" y="374" width="10" height="10" fill="#80a8c8"/><rect x="1267" y="385.300" width="10" height="10" fill="#800080"/><rect x="1267" y="396.700" width="10" height="10" fill="#808080"/><rect x="1267" y="408" width="10" height="10" fill="#ffc0cb"/><rect x="1267" y="419.300" width="10" height="10" fill="#ffd700"/><rect x="1267" y="430.700" width="10" height="10" fill="#a52a00"/><rect x="1267" y="442" width="10" height="10" fill="#008000"/><rect x="1267" y="453.300" width="10" height="10" fill="#000050"/><rect x="1267" y="464.700" width="10" height="10" fill="#20c0e8"/><rect x="1267" y="476" width="10" height="10" fill="#f07850"/><rect x="1267" y="487.300" width="10" height="10" fill="#800000"/>
<path d="M1268 508v-8l7 8v-8" fill="none" stroke="#2a3a7a" stroke-width="1.600"/><path d="M1272 501l4 2" stroke="#c04020" stroke-width="1.500"/><path d="M1268 505l3 3" stroke="#30a040" stroke-width="1.500"/>

<!-- status bar -->
<rect x="0" y="672" width="1280" height="17" fill="#f0f0f0"/>
<path d="M0 671.500H1066" stroke="#b8b8b8"/>
<text class="s" x="4" y="683.500" textLength="111" lengthAdjust="spacingAndGlyphs">Нет выбранных объектов</text>
<circle cx="941" cy="680.500" r="4.500" fill="#1a50c0"/><path d="M937 677a5 5 0 0 1 8 1" fill="none" stroke="#30a030" stroke-width="2"/><circle cx="941" cy="680.500" r="1.500" fill="#fff"/>
<path d="M958 676h7v10h-9l2-2z" fill="#9ab4e0" stroke="#3a5aa0"/>
<path d="M971 680.500h12M977 674.500v12" stroke="#444"/>
<rect x="988.500" y="675.500" width="10" height="10" fill="#cce4f7" stroke="#3a6a9a"/><path d="M988.500 675.500l10 10M998.500 675.500l-10 10" stroke="#3a6a9a"/>
<text class="s" x="1008" y="683.500" textLength="69" lengthAdjust="spacingAndGlyphs">-56.343 21.535 0.0</text>
<path d="M1133 676l5 4.500-5 4.500z" fill="#111"/>
<text class="s" x="1145" y="684" style="fill:#aaa">U</text>
<rect x="1158" y="674" width="122" height="13" fill="#c6c6c6"/><path d="M1158.500 687v-13H1280" fill="none" stroke="#666"/>

<!-- taskbar -->
<rect x="0" y="689" width="1280" height="31" fill="#2a2a2a"/>
<rect x="145" y="690" width="48" height="30" fill="#5e5e5e"/>
<rect x="195" y="690" width="49" height="30" fill="#8c8c8c"/><path d="M195 690h49v30h-49z" fill="none" stroke="#a8a8a8"/>
<path d="M145 719.500h48" stroke="#999"/>
<path d="M10 696l9-1.300V704H10zM20.500 694.400L31 693v11H20.500zM10 705h9v9.300L10 713zM20.500 705H31v11l-10.500-1.500z" fill="#f4f4f4"/>
<circle cx="67" cy="705" r="11.500" fill="#0f78c8"/><path d="M57 701q3-8 11-8 8 0 10 7 0 4-5 4H62q-4-1-5-3z" fill="#48c8a0"/><path d="M61 706q1 7 8 8 5 0 8-3-6 2-9-1-2-2-1-4z" fill="#1a9ae0"/><ellipse cx="70" cy="708" rx="4" ry="2.500" fill="#2a2a2a"/>
<text x="108" y="716" style="font-family:'Liberation Serif',serif;font-size:30px;font-style:italic;fill:#2f9fe8;font-weight:bold">e</text>
<path d="M107 712q2-10 14-18 8-3 7 1" fill="none" stroke="#e8c030" stroke-width="2"/>
<circle cx="168" cy="705" r="10.500" fill="#1090e0"/>
<text x="163" y="711" style="fill:#fff;font-size:17px;font-weight:bold">S</text>
<g transform="translate(219 705)"><use href="#af"/></g>
<g transform="translate(269 705)"><use href="#af"/></g>
<rect x="308" y="694" width="24" height="23" rx="2" fill="#f4f4f4"/><path d="M311 716l9-21 5 21-4-4-2-3-4 3z" fill="#d03020"/><path d="M311 716l9-21-2 12z" fill="#30a040"/>
<rect x="359" y="691" width="25" height="27" fill="#111"/>
<text x="360" y="710" textLength="23" lengthAdjust="spacingAndGlyphs" style="fill:#f4f4f4;font-size:21px;font-weight:bold;font-family:'Liberation Serif',serif">Res</text>
<rect x="360" y="711" width="23" height="6" fill="#c02020"/>
<path d="M411 706q4-4 12-4 8 0 11-3 1 6-3 10-6 5-12 3-6-1-8-6z" fill="#c83020"/><path d="M432 698q3-5 2-9" fill="none" stroke="#8a7a30" stroke-width="1.500"/>
<g transform="translate(472 705)"><use href="#af"/></g>
<g fill="none" stroke="#70b8e8" stroke-width="2.500"><path d="M511 696h24l-2 20h-20z" fill="#c0e0f8"/><path d="M509 704h28"/><rect x="517" y="702" width="11" height="7" fill="#204880" stroke="#fff" stroke-width="1.500"/></g>
<g transform="translate(573 705)"><use href="#af"/></g>
<path d="M614 717l10-12 3 3-10 11z" fill="#e8e8e8"/><path d="M628 696l1.500 3 3.500.5-2.500 2.500.5 3.500-3-1.500-3 1.500.5-3.500-2.500-2.500 3.500-.5zM618 698l1 2 2 .3-1.500 1.500.3 2-1.800-1-1.800 1 .3-2-1.500-1.500 2-.3zM634 707l.8 1.600 1.800.3-1.300 1.200.3 1.800-1.600-.8-1.600.8.3-1.800-1.300-1.200 1.800-.3z" fill="#f0d020"/>
<rect x="662" y="691" width="26" height="27" rx="1" fill="#c81f2c"/>
<text x="677" y="698" style="fill:#f4f4f4;font-size:6px;font-weight:bold">PDF</text>
<path d="M665 712l7-10 3 5 3-5 6 10h-4l-2-4-3 4-3-4-3 4z" fill="#f4f4f4"/>
<rect x="714.500" y="692" width="24" height="27" fill="#0c2436" stroke="#2a9ad8" stroke-width="1.500"/>
<text x="718" y="711" style="fill:#31a8ff;font-size:15px;font-family:'Liberation Sans',sans-serif">Ps</text>
<path d="M1046 704l4-4 4 4z" fill="#ddd"/>
<path d="M1071 700h9v9h-9z" fill="none" stroke="#bbb"/><path d="M1073 702l5 5M1078 702l-5 5M1069 700v8" stroke="#ccc"/>
<path d="M1099 709a9 9 0 0 1 9-9M1102 709a6 6 0 0 1 6-6M1105 709a3 3 0 0 1 3-3" fill="none" stroke="#999"/>
<path d="M1123 702h3l3-3v11l-3-3h-3z" fill="none" stroke="#ccc"/><path d="M1132 702l4 4M1136 702l-4 4" stroke="#ccc"/>
<text x="1149" y="708" style="fill:#ddd;font-size:10.500px">РУС</text>
<text x="1190" y="699" style="fill:#e4e4e4;font-size:10.500px">17:04</text>
<text x="1179" y="714" style="fill:#e4e4e4;font-size:10.500px">15.05.2024</text>
<path d="M1241.500 699.500h12v12h-4l-2 2-2-2h-4z" fill="none" stroke="#ddd"/>
</svg>
</body></html>
